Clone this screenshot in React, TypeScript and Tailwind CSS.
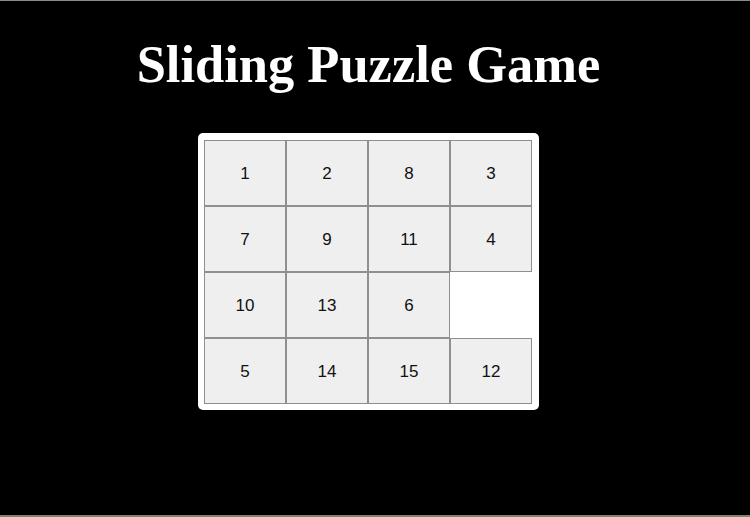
const tiles: (number | null)[] = [1, 2, 8, 3, 7, 9, 11, 4, 10, 13, 6, null, 5, 14, 15, 12];

export default function App() {
  return (
    <div className="h-[517px] bg-black border-t border-t-[#8a8a8a] border-b-2 border-b-[#7d8468] pr-[13px] flex flex-col items-center overflow-hidden">
      <h1 className="mt-[35px] text-white font-bold text-[52.5px] leading-[56px] font-['Liberation_Serif',serif]">
        Sliding Puzzle Game
      </h1>
      <div className="mt-[41px] bg-white rounded-[5px] pt-[7px] pb-[6px] pl-[6px] pr-[7px] grid grid-cols-[repeat(4,82px)] grid-rows-[repeat(4,66px)]">
        {tiles.map((t, i) =>
          t === null ? (
            <div key={i} />
          ) : (
            <button
              key={i}
              className="bg-[#efefef] border border-[#8f8f8f] pt-[2px] text-[17px] text-[#111] font-['Liberation_Sans',sans-serif] flex items-center justify-center"
            >
              {t}
            </button>
          ),
        )}
      </div>
    </div>
  );
}
